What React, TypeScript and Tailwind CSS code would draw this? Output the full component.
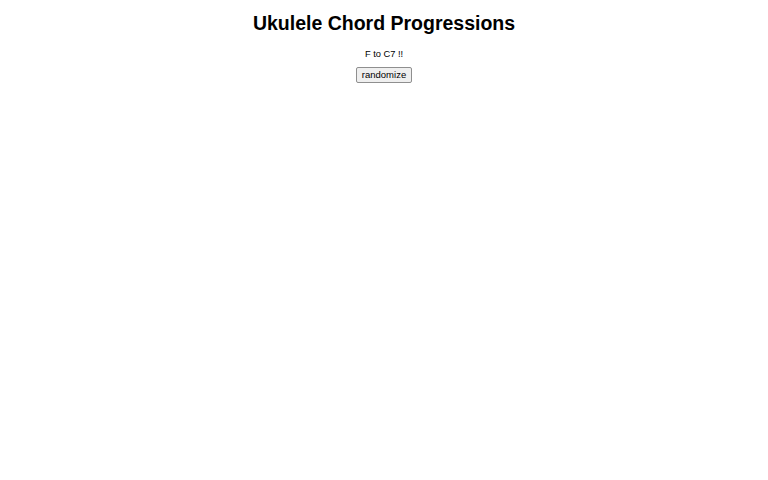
import React from 'react';

export default function App() {
  return (
    <div className="min-h-[480px] bg-white text-center font-['Liberation_Sans',Arial,sans-serif] text-black">
      <h1 className="pt-[11px] text-[19.5px] font-bold leading-[24px]">Ukulele Chord Progressions</h1>
      <p className="mt-[13px] text-[9.3px] leading-[12px]">F to C7 !!</p>
      <div className="mt-[7px] flex justify-center">
        <button className="h-[16px] rounded-[2px] border border-[#8f8f8f] bg-[#efefef] px-[4.5px] text-[9.5px] leading-[12px] text-black">
          randomize
        </button>
      </div>
    </div>
  );
}
